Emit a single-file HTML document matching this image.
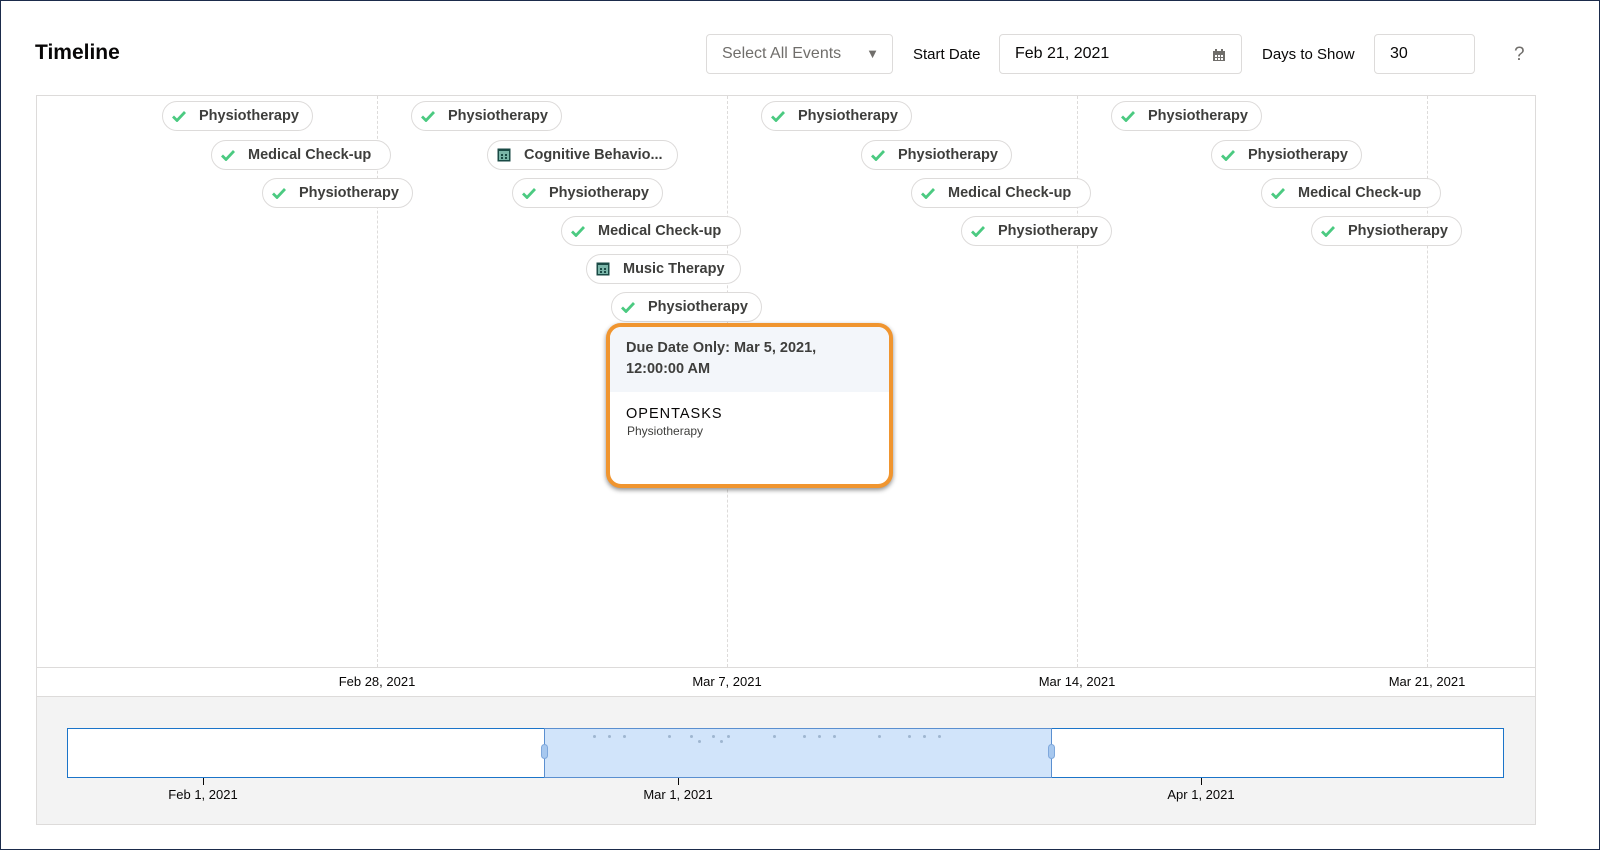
<!DOCTYPE html>
<html><head><style>
*{box-sizing:border-box;margin:0;padding:0}
body{width:1600px;height:850px;background:#fff;font-family:"Liberation Sans",sans-serif;color:#080707;position:relative;overflow:hidden;border:1px solid #1b2b4b}
.abs{position:absolute}
.pill{position:absolute;height:30px;border:1px solid #dddbda;border-radius:16px;background:#fff;font-size:14.5px;font-weight:bold;color:#3e3e3c;line-height:28px;padding-left:36px;white-space:nowrap}
.pill svg{position:absolute;left:9px;top:8px}
.dash{position:absolute;top:95px;height:571px;border-left:1px dashed #dddbda}
.ax{position:absolute;top:673px;font-size:13px;color:#080707;transform:translateX(-50%)}
.inp{position:absolute;border:1px solid #dddbda;border-radius:4px;background:#fff;height:40px;font-size:16px;line-height:38px;padding-left:15px}
.dot{position:absolute;width:3px;height:3px;background:#9fb6d0;border-radius:50%}
</style></head><body>
<div class="abs" style="left:34px;top:40px;font-size:21px;font-weight:bold">Timeline</div>
<div class="inp" style="left:705px;top:33px;width:187px;color:#706e6b">Select All Events<span style="position:absolute;right:13px;top:0;font-size:13px;color:#706e6b">&#9660;</span></div>
<div class="abs" style="left:912px;top:45px;font-size:15px">Start Date</div>
<div class="inp" style="left:998px;top:33px;width:243px">Feb 21, 2021
<svg class="abs" style="left:212px;top:13px" width="14" height="14" viewBox="0 0 14 14"><rect x="1" y="3" width="12" height="10" fill="#706e6b"/><rect x="3" y="1" width="2" height="3" fill="#706e6b"/><rect x="9" y="1" width="2" height="3" fill="#706e6b"/><g fill="#fff"><rect x="3" y="7" width="2" height="2"/><rect x="6" y="7" width="2" height="2"/><rect x="9" y="7" width="2" height="2"/><rect x="3" y="10" width="2" height="2"/><rect x="6" y="10" width="2" height="2"/><rect x="9" y="10" width="2" height="2"/></g></svg></div>
<div class="abs" style="left:1261px;top:45px;font-size:15px">Days to Show</div>
<div class="inp" style="left:1373px;top:33px;width:101px">30</div>
<div class="abs" style="left:1513px;top:43px;font-size:19px;color:#706e6b">?</div>

<div class="abs" style="left:35px;top:94px;width:1500px;height:730px;border:1px solid #dddbda"></div>
<div class="dash" style="left:376px"></div><div class="dash" style="left:726px"></div><div class="dash" style="left:1076px"></div><div class="dash" style="left:1426px"></div>
<div class="abs" style="left:36px;top:666px;width:1498px;border-top:1px solid #dddbda"></div>
<div class="ax" style="left:376px">Feb 28, 2021</div><div class="ax" style="left:726px">Mar 7, 2021</div><div class="ax" style="left:1076px">Mar 14, 2021</div><div class="ax" style="left:1426px">Mar 21, 2021</div>
<div class="abs" style="left:36px;top:695px;width:1498px;height:128px;background:#f3f3f3;border-top:1px solid #dddbda"></div>
<div class="abs" style="left:66px;top:727px;width:1437px;height:50px;background:#fff;border:1px solid #1b74c9"></div>
<div class="abs" style="left:543px;top:727px;width:508px;height:50px;background:#d1e4fa;border:1px solid #5a8fd0"></div>
<div class="abs" style="left:540px;top:743px;width:7px;height:15px;background:#a7c8ef;border:1px solid #7fa8dc;border-radius:4px"></div>
<div class="abs" style="left:1047px;top:743px;width:7px;height:15px;background:#a7c8ef;border:1px solid #7fa8dc;border-radius:4px"></div>
<div class="dot" style="left:592px;top:734px"></div><div class="dot" style="left:607px;top:734px"></div><div class="dot" style="left:622px;top:734px"></div><div class="dot" style="left:667px;top:734px"></div><div class="dot" style="left:689px;top:734px"></div><div class="dot" style="left:697px;top:739px"></div><div class="dot" style="left:711px;top:734px"></div><div class="dot" style="left:719px;top:739px"></div><div class="dot" style="left:726px;top:734px"></div><div class="dot" style="left:772px;top:734px"></div><div class="dot" style="left:802px;top:734px"></div><div class="dot" style="left:817px;top:734px"></div><div class="dot" style="left:832px;top:734px"></div><div class="dot" style="left:877px;top:734px"></div><div class="dot" style="left:907px;top:734px"></div><div class="dot" style="left:922px;top:734px"></div><div class="dot" style="left:937px;top:734px"></div>
<div class="abs" style="left:202px;top:777px;width:1px;height:7px;background:#080707"></div>
<div class="abs" style="left:677px;top:777px;width:1px;height:7px;background:#080707"></div>
<div class="abs" style="left:1200px;top:777px;width:1px;height:7px;background:#080707"></div>
<div class="ax" style="left:202px;top:786px">Feb 1, 2021</div><div class="ax" style="left:677px;top:786px">Mar 1, 2021</div><div class="ax" style="left:1200px;top:786px">Apr 1, 2021</div>

<div id="pills"></div>
<script>
var ck='<svg width="14" height="12" viewBox="0 0 14 12"><path d="M1 6.5l4 4L13 2" stroke="#4bca81" stroke-width="2.8" fill="none"/></svg>';
var cal='<svg width="14" height="14" viewBox="0 0 14 14" style="left:9px;top:7px"><rect x="0.5" y="0.5" width="13" height="13" fill="#1a4a45"/><rect x="2" y="3" width="10" height="9" fill="#7ab5a9"/><g fill="#1a4a45"><rect x="4" y="6" width="2" height="2"/><rect x="8" y="6" width="2" height="2"/><rect x="4" y="9" width="2" height="2"/><rect x="8" y="9" width="2" height="2"/></g></svg>';
var P=[[161,115,151,'Physiotherapy'],[210,154,180,'Medical Check-up'],[261,192,151,'Physiotherapy'],[410,115,151,'Physiotherapy'],[486,154,191,'Cognitive Behavio...',1],[511,192,151,'Physiotherapy'],[560,230,180,'Medical Check-up'],[585,268,155,'Music Therapy',1],[610,306,151,'Physiotherapy'],[760,115,151,'Physiotherapy'],[860,154,151,'Physiotherapy'],[910,192,180,'Medical Check-up'],[960,230,151,'Physiotherapy'],[1110,115,151,'Physiotherapy'],[1210,154,151,'Physiotherapy'],[1260,192,180,'Medical Check-up'],[1310,230,151,'Physiotherapy']];
var h='';P.forEach(function(p){h+='<div class="pill" style="left:'+p[0]+'px;top:'+(p[1]-15)+'px;width:'+p[2]+'px">'+(p[4]?cal:ck)+p[3]+'</div>'});
document.getElementById('pills').innerHTML=h;
</script>

<div class="abs" style="left:605px;top:322px;width:287px;height:165px;border:4px solid #f0952f;border-radius:15px;background:#fff;overflow:hidden;box-shadow:0 2px 5px rgba(0,0,0,.45)">
<div style="background:#f3f6fa;height:65px;padding:11px 0 0 16px;font-size:14.5px;font-weight:bold;color:#3e3e3c;line-height:21px">Due Date Only: Mar 5, 2021,<br>12:00:00 AM</div>
<div style="padding:14px 0 0 16px;font-size:14.5px;letter-spacing:1px;color:#080707">OPENTASKS</div>
<div style="padding:2px 0 0 17px;font-size:12px;color:#3e3e3c">Physiotherapy</div>
</div>
</body></html>
